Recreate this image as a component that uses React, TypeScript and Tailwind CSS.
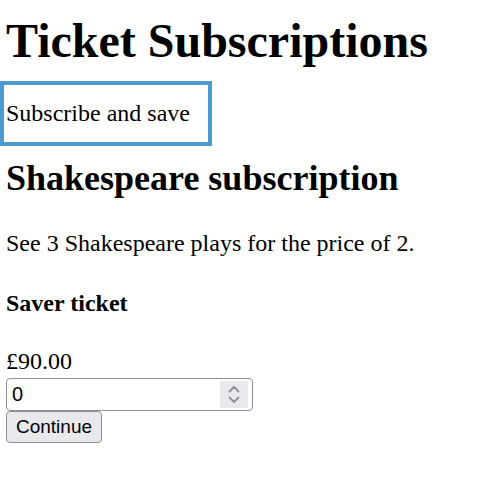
import React from "react";

const serif = { fontFamily: '"Liberation Serif", "Times New Roman", serif' };
const sans = '[font-family:"Liberation_Sans",Arial,sans-serif]';

function NumberField() {
  return (
    <div className="relative mt-[3px] w-[247px] h-[33px]">
      <input
        type="number"
        readOnly
        value={0}
        className={`${sans} block w-full h-full rounded-[4px] border border-[#8f8f9d] bg-white pl-[5px] pr-[34px] text-[20px] text-black outline-none [appearance:textfield] [&::-webkit-inner-spin-button]:appearance-none [&::-webkit-outer-spin-button]:appearance-none`}
      />
      <div className="absolute right-[5px] top-[3px] flex h-[27px] w-[28px] flex-col items-center justify-center gap-[3px] bg-[#e9e9ed]">
        <svg width="12" height="8" viewBox="0 0 12 8" fill="none">
          <path d="M1.5 6.5 L6 2 L10.5 6.5" stroke="#8f8f9d" strokeWidth="1.8" strokeLinecap="round" strokeLinejoin="round" />
        </svg>
        <svg width="12" height="8" viewBox="0 0 12 8" fill="none">
          <path d="M1.5 1.5 L6 6 L10.5 1.5" stroke="#8f8f9d" strokeWidth="1.8" strokeLinecap="round" strokeLinejoin="round" />
        </svg>
      </div>
    </div>
  );
}

export default function App() {
  return (
    <div className="min-h-[481px] bg-white pl-[6px] pt-[13px] text-black" style={serif}>
      <h1 className="text-[48px] font-bold leading-[55px]">Ticket Subscriptions</h1>

      <div className="-ml-[6px] mt-[13px] w-[212px] border-4 border-[#4b9ad0] py-[15px] pl-[2px] text-[24px] leading-[27px]">
        Subscribe and save
      </div>

      <h2 className="mt-[12px] text-[36px] font-bold leading-[41px]">Shakespeare subscription</h2>

      <p className="mt-[31px] text-[24px] leading-[27px]">See 3 Shakespeare plays for the price of 2.</p>

      <h4 className="mt-[33px] text-[24px] font-bold leading-[27px]">Saver ticket</h4>

      <p className="mt-[31px] text-[24px] leading-[27px]">£90.00</p>

      <NumberField />

      <button
        type="button"
        className={`${sans} block h-[32px] w-[96px] rounded-[4px] border border-[#8f8f9d] bg-[#e9e9ed] text-[19px] text-black`}
      >
        Continue
      </button>
    </div>
  );
}
